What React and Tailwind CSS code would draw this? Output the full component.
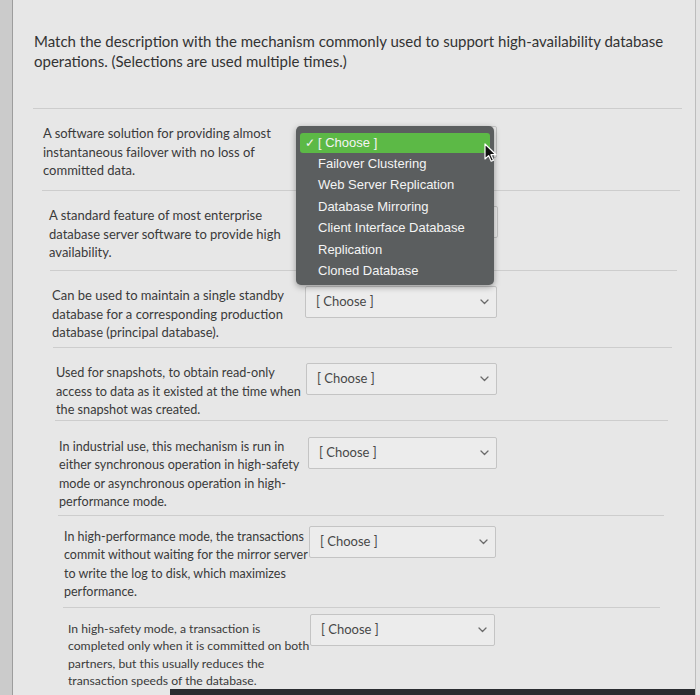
const rows = [
  {
    lines: ['A software solution for providing almost', 'instantaneous failover with no loss of', 'committed data.'],
    row: 'ml-[20px] w-[649px] h-[82px]',
    text: 'w-[264px] pl-[10px] pt-[15px] text-[13px] leading-[18.5px]',
    sel: 'mt-[17px] w-[200px]',
  },
  {
    lines: ['A standard feature of most enterprise', 'database server software to provide high', 'availability.'],
    row: 'ml-[29px] w-[638px] h-[80px]',
    text: 'w-[258px] pl-[7px] pt-[15px] text-[13px] leading-[18.5px]',
    sel: 'mt-[15px] w-[198px]',
  },
  {
    lines: ['Can be used to maintain a single standby', 'database for a corresponding production', 'database (principal database).'],
    row: 'ml-[37px] w-[627px] h-[77px]',
    text: 'w-[255px] pl-[2px] pt-[15px] text-[13px] leading-[18.5px]',
    sel: 'mt-[15px] w-[192px]',
  },
  {
    lines: ['Used for snapshots, to obtain read-only', 'access to data as it existed at the time when', 'the snapshot was created.'],
    row: 'ml-[40px] w-[619px] h-[73px]',
    text: 'w-[253px] pl-[3px] pt-[15px] text-[12.7px] leading-[18.5px]',
    sel: 'mt-[15px] w-[191px]',
  },
  {
    lines: ['In industrial use, this mechanism is run in', 'either synchronous operation in high-safety', 'mode or asynchronous operation in high-', 'performance mode.'],
    row: 'ml-[42px] w-[613px] h-[95px]',
    text: 'w-[253px] pl-[4px] pt-[17px] text-[12.6px] leading-[18.3px]',
    sel: 'mt-[16px] w-[189px]',
  },
  {
    lines: ['In high-performance mode, the transactions', 'commit without waiting for the mirror server', 'to write the log to disk, which maximizes', 'performance.'],
    row: 'ml-[45px] w-[606px] h-[92px]',
    text: 'w-[251px] pl-[6px] pt-[12px] text-[12.5px] leading-[18.3px]',
    sel: 'mt-[10px] w-[187px]',
  },
  {
    lines: ['In high-safety mode, a transaction is', 'completed only when it is committed on both', 'partners, but this usually reduces the', 'transaction speeds of the database.'],
    row: 'ml-[50px] w-[597px] h-[81px]',
    text: 'w-[247px] pl-[5px] pt-[12px] text-[12.2px] leading-[17.4px]',
    sel: 'mt-[6px] w-[185px]',
  },
];

const options = [
  'Failover Clustering',
  'Web Server Replication',
  'Database Mirroring',
  'Client Interface Database',
  'Replication',
  'Cloned Database',
];

const Chevron = () => (
  <svg width="9" height="6" viewBox="0 0 9 6" fill="none">
    <path d="M1 1l3.5 3.5L8 1" stroke="#6b6b6b" strokeWidth="1.3" strokeLinecap="round" strokeLinejoin="round" />
  </svg>
);

const Select = ({ className }) => (
  <div className={`${className} relative h-[32px] shrink-0 flex items-center justify-between pl-[10px] pr-[7px] bg-[#ececec] border border-[#c4c4c4] rounded-[2px] text-[13px] text-[#484848]`}>
    <span>[ Choose ]</span>
    <Chevron />
  </div>
);

export default function App() {
  return (
    <div className="relative w-[700px] h-[695px] overflow-hidden bg-[#e3e3e3] flex font-['Lato','Noto_Sans',sans-serif]">
      <div className="w-[13px] shrink-0 bg-[#cbcbcb] border-r border-[#9d9d9d]" />

      <div className="w-[683px] shrink-0 flex flex-col bg-[#e7e7e7] border-r border-[#bdbdbd]">
        <div className="h-[108px] shrink-0 pt-[31px] pl-[21px] text-[15px] leading-[20px] text-[#333]">
          <p>Match the description with the mechanism commonly used to support high-availability database</p>
          <p>operations. (Selections are used multiple times.)</p>
        </div>

        {rows.map((r, i) => (
          <div key={i} className={`${r.row} shrink-0 flex border-t border-[#cdcdcd]`}>
            <div className={`${r.text} shrink-0 text-[#3a3a3a]`}>
              {r.lines.map((l, j) => (
                <span key={j} className="block whitespace-nowrap">{l}</span>
              ))}
            </div>
            <Select className={r.sel} />
          </div>
        ))}

        <div className="ml-[157px] h-[6px] mt-auto bg-[#2b2d31]" />
      </div>

      {/* open select menu */}
      <div className="absolute left-[296px] top-[126px] w-[198px] pt-[7px] pb-[4px] px-[4px] bg-[#5b5e5f] rounded-[5px] shadow-[0_2px_6px_rgba(0,0,0,0.35)] font-['Liberation_Sans',Arial,sans-serif] text-[13px] text-[#f4f4f4]">
        <div className="h-[20px] flex items-center bg-[#5cb946] rounded-[3px] pl-[5px]">
          <span className="w-[13px] text-[12px]">✓</span>
          <span>[ Choose ]</span>
        </div>
        {options.map((o) => (
          <div key={o} className="h-[21.4px] flex items-center pl-[18px]">{o}</div>
        ))}
      </div>

      {/* mouse pointer */}
      <svg className="absolute left-[484px] top-[143px]" width="13" height="19" viewBox="0 0 13 19">
        <path d="M1 1v15l3.6-3.4 2.6 5.6 2.3-1-2.6-5.5H12z" fill="#111" stroke="#fff" strokeWidth="1.2" strokeLinejoin="round" />
      </svg>
    </div>
  );
}
